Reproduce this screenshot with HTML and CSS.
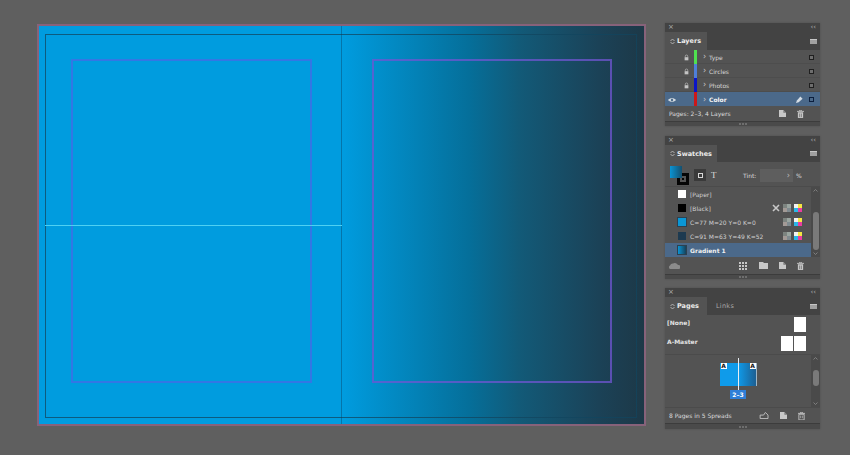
FILE: index.html
```html
<!DOCTYPE html>
<html lang="en">
<head>
<meta charset="utf-8">
<title>InDesign workspace</title>
<link rel="stylesheet" href="styles.css">
</head>
<body>
<main class="workspace">
  <section class="spread">
    <div class="fold"></div>
    <div class="guide"></div>
    <div class="bleed">
      <div class="margin-box left"></div>
      <div class="margin-box right"></div>
    </div>
  </section>

  <aside class="dock">
    <section class="panel layers">
      <div class="panel-top"><span class="x">×</span><span class="collapse">‹‹</span></div>
      <div class="tabbar">
        <div class="tab active"><svg class="updown" viewBox="0 0 5 7"><path d="M.5 3 2.500 1l2 2M.5 4l2 2 2-2" fill="none" stroke="#c8c8c8" stroke-width=".8"/></svg>Layers</div>
        <div class="menu-icon"></div>
      </div>
      <div class="layer-list">
        <div class="layer">
          <span class="eye"></span>
          <svg class="lock" viewBox="0 0 8 9"><path d="M2 4V2.500a2 2 0 0 1 4 0V4" fill="none" stroke="#c4c4c4"/><rect x="1" y="4" width="6" height="5" fill="#c4c4c4"/></svg>
          <span class="layer-color green"></span><span class="chev">›</span><span class="name">Type</span>
          <span class="target"></span>
        </div>
        <div class="layer">
          <span class="eye"></span>
          <svg class="lock" viewBox="0 0 8 9"><path d="M2 4V2.500a2 2 0 0 1 4 0V4" fill="none" stroke="#c4c4c4"/><rect x="1" y="4" width="6" height="5" fill="#c4c4c4"/></svg>
          <span class="layer-color sky"></span><span class="chev">›</span><span class="name">Circles</span>
          <span class="target"></span>
        </div>
        <div class="layer">
          <span class="eye"></span>
          <svg class="lock" viewBox="0 0 8 9"><path d="M2 4V2.500a2 2 0 0 1 4 0V4" fill="none" stroke="#c4c4c4"/><rect x="1" y="4" width="6" height="5" fill="#c4c4c4"/></svg>
          <span class="layer-color blue"></span><span class="chev">›</span><span class="name">Photos</span>
          <span class="target"></span>
        </div>
        <div class="layer selected">
          <svg class="eye-icon" viewBox="0 0 10 7"><path d="M0 3.500C2 .5 8 .5 10 3.500 8 6.500 2 6.500 0 3.500Z" fill="#d6dce2"/><circle cx="5" cy="3.500" r="1.500" fill="#4c6a8a"/></svg>
          <span class="lock-space"></span>
          <span class="layer-color red"></span><span class="chev">›</span><span class="name bright">Color</span>
          <svg class="pen" viewBox="0 0 8 8"><path d="M0 8l1-3 4-4.500 2.500 2.500-4.500 4Z" fill="#d5dde5"/></svg>
          <span class="target blue-target"></span>
        </div>
      </div>
      <div class="footer">
        <span class="foot-text">Pages: 2–3, 4 Layers</span>
        <svg class="tool new" viewBox="0 0 8 8"><path d="M0 0h5l3 3v5H0Z" fill="#c8c8c8"/><path d="M5 0l3 3H5Z" fill="#777"/></svg>
        <svg class="tool trash" viewBox="0 0 8 9"><path d="M0 1.500h8M3 1V0h2v1" fill="none" stroke="#c8c8c8"/><path d="M1 2.500h6V9H1Z" fill="#c8c8c8"/><path d="M3 4v4M5 4v4" stroke="#555" stroke-width=".7"/></svg>
      </div>
      <div class="grip"><i></i><i></i><i></i></div>
    </section>

    <section class="panel swatches">
      <div class="panel-top"><span class="x">×</span><span class="collapse">‹‹</span></div>
      <div class="tabbar">
        <div class="tab active wide"><svg class="updown" viewBox="0 0 5 7"><path d="M.5 3 2.500 1l2 2M.5 4l2 2 2-2" fill="none" stroke="#c8c8c8" stroke-width=".8"/></svg>Swatches</div>
        <div class="menu-icon"></div>
      </div>
      <div class="swatch-tools">
        <div class="fillstroke"><span class="stroke-sw"></span><span class="fill-sw"></span></div>
        <span class="container-btn"><i></i></span>
        <span class="t-btn">T</span>
        <span class="tint-label">Tint:</span>
        <span class="tint-field">›</span>
        <span class="pct">%</span>
      </div>
      <div class="scroll-area">
        <ul class="swatch-list">
          <li class="swatch"><span class="chip paper"></span><span class="sw-name">[Paper]</span></li>
          <li class="swatch"><span class="chip black"></span><span class="sw-name">[Black]</span>
            <svg class="cross" viewBox="0 0 8 8"><path d="M1 1l6 6M7 1L1 7" stroke="#c8c8c8" stroke-width="1.600"/></svg>
            <span class="cmyk-a"></span><span class="cmyk-b"></span></li>
          <li class="swatch"><span class="chip cyan"></span><span class="sw-name">C=77 M=20 Y=0 K=0</span>
            <span class="cmyk-a"></span><span class="cmyk-b"></span></li>
          <li class="swatch"><span class="chip navy"></span><span class="sw-name">C=91 M=63 Y=49 K=52</span>
            <span class="cmyk-a"></span><span class="cmyk-b"></span></li>
          <li class="swatch selected"><span class="chip grad"></span><span class="sw-name bright">Gradient 1</span></li>
        </ul>
        <div class="scrollbar">
          <svg class="arrow" viewBox="0 0 5 3"><path d="M.5 2.500l2-2 2 2" fill="none" stroke="#8c8c8c" stroke-width=".8"/></svg>
          <span class="thumb swatch-thumb"></span>
          <svg class="arrow arrow-down" viewBox="0 0 5 3"><path d="M.5.5l2 2 2-2" fill="none" stroke="#8c8c8c" stroke-width=".8"/></svg>
        </div>
      </div>
      <div class="footer tall">
        <svg class="cloud" viewBox="0 0 11 7"><path d="M1 7a2 2 0 0 1 0-3.500 3 3 0 0 1 3-2 3.500 3.500 0 0 1 5 1.500A2 2 0 0 1 10 7Z" fill="#8b8b8b"/></svg>
        <span class="push"></span>
        <svg class="tool grid-ic" viewBox="0 0 9 8"><path d="M0 0h2v2H0ZM3 0h2v2H3ZM6 0h2v2H6ZM0 3h2v2H0ZM3 3h2v2H3ZM6 3h2v2H6ZM0 6h2v2H0ZM3 6h2v2H3ZM6 6h2v2H6Z" fill="#c8c8c8"/></svg>
        <svg class="tool folder" viewBox="0 0 9 7"><path d="M0 0h4l1 1h4v6H0Z" fill="#c8c8c8"/></svg>
        <svg class="tool new" viewBox="0 0 8 8"><path d="M0 0h5l3 3v5H0Z" fill="#c8c8c8"/><path d="M5 0l3 3H5Z" fill="#777"/></svg>
        <svg class="tool trash" viewBox="0 0 8 9"><path d="M0 1.500h8M3 1V0h2v1" fill="none" stroke="#c8c8c8"/><path d="M1 2.500h6V9H1Z" fill="#c8c8c8"/><path d="M3 4v4M5 4v4" stroke="#555" stroke-width=".7"/></svg>
      </div>
      <div class="grip"><i></i><i></i><i></i></div>
    </section>

    <section class="panel pages">
      <div class="panel-top"><span class="x">×</span><span class="collapse">‹‹</span></div>
      <div class="tabbar">
        <div class="tab active"><svg class="updown" viewBox="0 0 5 7"><path d="M.5 3 2.500 1l2 2M.5 4l2 2 2-2" fill="none" stroke="#c8c8c8" stroke-width=".8"/></svg>Pages</div>
        <div class="tab">Links</div>
        <div class="menu-icon"></div>
      </div>
      <div class="masters">
        <div class="master"><span class="m-name">[None]</span><span class="thumb-page"></span></div>
        <div class="master"><span class="m-name">A-Master</span><span class="thumb-page"></span><span class="thumb-page"></span></div>
      </div>
      <div class="scroll-area pages-area">
        <div class="spread-view">
          <div class="mini">
            <span class="mini-a left-a">A</span>
            <span class="mini-a right-a">A</span>
            <span class="mini-fold"></span>
          </div>
          <span class="mini-label">2–3</span>
        </div>
        <div class="scrollbar">
          <svg class="arrow" viewBox="0 0 5 3"><path d="M.5 2.500l2-2 2 2" fill="none" stroke="#8c8c8c" stroke-width=".8"/></svg>
          <span class="thumb pages-thumb"></span>
          <svg class="arrow arrow-down" viewBox="0 0 5 3"><path d="M.5.5l2 2 2-2" fill="none" stroke="#8c8c8c" stroke-width=".8"/></svg>
        </div>
      </div>
      <div class="footer">
        <span class="foot-text">8 Pages in 5 Spreads</span>
        <svg class="tool shapes" viewBox="0 0 11 8"><path d="M.5 7.500V3.500h4l2-3 3 3v4Z" fill="none" stroke="#c8c8c8"/></svg>
        <svg class="tool new" viewBox="0 0 8 8"><path d="M0 0h5l3 3v5H0Z" fill="#c8c8c8"/><path d="M5 0l3 3H5Z" fill="#777"/></svg>
        <svg class="tool trash" viewBox="0 0 8 9"><path d="M0 1.500h8M3 1V0h2v1" fill="none" stroke="#c8c8c8"/><path d="M1 2.500h6V9H1Z" fill="none" stroke="#c8c8c8"/><path d="M3 4v3M5 4v3" stroke="#c8c8c8" stroke-width=".7"/></svg>
      </div>
      <div class="grip"><i></i><i></i><i></i></div>
    </section>
  </aside>
</main>
</body>
</html>
```
FILE: styles.css
```css
* { box-sizing: border-box; }
html, body { margin: 0; height: 100%; }
body {
  background: #5f5f5f;
  font-family: "DejaVu Sans", "Liberation Sans", sans-serif;
  overflow: hidden;
}
.workspace {
  display: flex;
  width: 850px;
  height: 455px;
  align-items: flex-start;
}

/* Document spread */
.spread {
  position: relative;
  flex: none;
  width: 609px;
  height: 402px;
  margin: 24px 19px 0 37px;
  padding: 8px 7px 6px 6px;
  border: 2px solid #87627a;
  background: linear-gradient(90deg, #009cdf 0, #009cdf 303px, #056f9a 430px, #125a78 480px, #1b4257 560px, #1d3847 606px);
  background-clip: padding-box;
}
.bleed {
  height: 384px;
  padding: 24px 25px 0 25px;
  display: flex;
  border: 1px solid rgba(18, 70, 95, .75);
}
.margin-box {
  flex: none;
  height: 324px;
}
.margin-box.left { width: 241px; margin-right: 60px; border: 2px solid rgba(70, 105, 230, .72); }
.margin-box.right { width: 240px; border: 2px solid rgba(112, 85, 210, .75); }
.fold {
  position: absolute;
  left: 302px;
  top: 0;
  bottom: 0;
  width: 1px;
  background: rgba(10, 60, 90, .4);
}
.guide {
  position: absolute;
  left: 6px;
  top: 199px;
  width: 297px;
  height: 1px;
  background: #4fd0f2;
}

/* Panels */
.dock {
  flex: none;
  width: 155px;
  padding-top: 23px;
  display: flex;
  flex-direction: column;
  gap: 10px;
}
.panel {
  background: #535353;
  color: #dcdcdc;
  font-size: 6px;
  box-shadow: 0 0 2px rgba(0, 0, 0, .2);
}
.panel-top {
  height: 9px;
  background: #434343;
  display: flex;
  justify-content: space-between;
  padding: 0 4px 0 3px;
  line-height: 9px;
  font-size: 7px;
  color: #b0b0b0;
}
.tabbar {
  height: 18px;
  background: #434343;
  display: flex;
  align-items: stretch;
}
.swatches .tabbar { height: 17px; }
.tab {
  width: 34px;
  display: flex;
  align-items: center;
  justify-content: center;
  letter-spacing: .3px;
  font-size: 6.500px;
  color: #a8a8a8;
}
.pages .tab { width: 36px; }
.tab.active {
  background: #535353;
  color: #ececec;
  font-weight: bold;
  font-size: 6.500px;
  width: 42px;
  justify-content: flex-start;
  padding-left: 5px;
  letter-spacing: 0;
}
.tab.wide { width: 52px; }
.updown { width: 5px; height: 7px; margin-right: 2px; flex: none; }
.menu-icon {
  width: 7px;
  height: 5px;
  margin: auto 3px auto auto;
  background: #a0a0a0;
  border-top: 1px solid #c6c6c6;
}

/* Layers */
.layer-list { height: 56px; }
.layer {
  height: 14px;
  display: flex;
  align-items: center;
  border-bottom: 1px solid #4d4d4d;
  padding-top: 1px;
}
.layer.selected { background: #4b698a; border-bottom: 0; }
.eye { width: 19px; flex: none; }
.eye-icon { width: 8px; height: 6px; margin: 0 8px 0 3px; flex: none; }
.lock { width: 5px; height: 7px; flex: none; margin-right: 5px; }
.lock-space { width: 5px; margin-right: 5px; flex: none; }
.layer-color { width: 3px; height: 14px; flex: none; margin: -1px 6px 0 0; }
.green { background: #4fe04f; }
.sky { background: #4f7fd8; }
.blue { background: #0a14c8; }
.red { background: #cc1818; }
.chev { width: 6px; flex: none; color: #c8c8c8; font-size: 8px; line-height: 8px; }
.name { flex: auto; color: #d6d6d6; }
.bright { color: #f4f4f4; font-weight: bold; }
.target {
  width: 5px;
  height: 5px;
  margin: 0 5px 0 6px;
  border: 1px solid #1f1f1f;
  background: #6e6e6e;
  flex: none;
}
.layer-list .target { margin-right: 6px; }
.blue-target { border-color: #0c1f3e; background: #4b698a; }
.pen { width: 7px; height: 7px; flex: none; }

.footer {
  height: 15px;
  display: flex;
  align-items: center;
  padding: 0 16px 0 4px;
  gap: 11px;
}
.footer.tall { height: 17px; }
.foot-text { flex: auto; color: #dcdcdc; font-size: 6px; }
.push { flex: auto; }
.tool { width: 7px; height: 7px; flex: none; }
.tool.trash { height: 8px; }
.tool.shapes { width: 11px; margin-right: -1px; }
.tool.folder { width: 9px; }
.tool.grid-ic { width: 9px; height: 8px; }
.cloud { width: 11px; height: 7px; flex: none; }
.grip {
  height: 5px;
  background: #4a4a4a;
  border-top: 1px solid #3c3c3c;
  display: flex;
  justify-content: center;
  align-items: center;
  gap: 1px;
}
.grip i { width: 2px; height: 2px; background: #6e6e6e; }

/* Swatches */
.swatch-tools {
  height: 24px;
  display: flex;
  align-items: center;
  padding: 2px 5px 0;
}
.fillstroke { position: relative; width: 19px; height: 19px; flex: none; margin-right: 5px; }
.stroke-sw {
  position: absolute; right: 0; bottom: 0;
  width: 12px; height: 12px;
  background: #050505;
  box-shadow: inset 0 0 0 3px #050505, inset 0 0 0 5px #555;
}
.fill-sw {
  position: absolute; left: 0; top: 0;
  width: 12px; height: 12px;
  background: linear-gradient(90deg, #0a94d4, #15506f);
}
.container-btn {
  width: 12px; height: 12px;
  background: #3a3a3a;
  display: flex; align-items: center; justify-content: center;
  flex: none;
}
.container-btn i { width: 5px; height: 5px; border: 1px solid #d8d8d8; }
.t-btn { font-family: "Liberation Serif", serif; font-size: 9px; margin-left: 5px; width: 32px; flex: none; }
.tint-label { width: 17px; flex: none; }
.tint-field {
  width: 33px; height: 13px;
  background: #5e5e5e;
  color: #bdbdbd;
  text-align: right;
  line-height: 13px;
  padding-right: 3px;
  font-size: 8px;
  flex: none;
}
.pct { margin-left: 3px; }
.scroll-area { display: flex; border-top: 1px solid #4b4b4b; }
.swatch-list { list-style: none; margin: 0; padding: 0; flex: auto; min-width: 0; }
.swatch {
  height: 14px;
  display: flex;
  align-items: center;
  padding-left: 13px;
  gap: 3px;
}
.swatch.selected { background: #4b698a; }
.chip { width: 8px; height: 8px; flex: none; margin-right: 1px; }
.paper { background: #fff; }
.black { background: #000; }
.cyan { background: #0a97d6; box-shadow: 0 0 0 1px #2d4150; }
.navy { background: #1d3a50; }
.grad { background: linear-gradient(90deg, #0a94d4, #16415a); box-shadow: 0 0 0 1px #2d4150; }
.sw-name { flex: auto; color: #d0d0d0; font-size: 6px; white-space: nowrap; }
.swatch.selected .sw-name { color: #f0f0f0; font-weight: bold; }
.cross { width: 8px; height: 8px; flex: none; }
.cmyk-a {
  width: 8px; height: 8px; flex: none;
  background: conic-gradient(#9aa5a0 0 25%, #7f8a8f 0 50%, #a39a96 0 75%, #7d8480 0);
}
.cmyk-b {
  width: 8px; height: 8px; flex: none;
  background: conic-gradient(#f5e642 0 25%, #e93da0 0 50%, #2bb7e6 0 75%, #f2f2f2 0);
}
.swatch .cmyk-b { margin-right: 9px; }
.scrollbar {
  position: relative;
  width: 9px;
  flex: none;
  background: #4a4a4a;
}
.arrow { position: absolute; left: 2px; top: 2px; width: 5px; height: 3px; }
.arrow-down { top: auto; bottom: 2px; }
.thumb { display: block; width: 6px; margin: 0 auto; background: #7a7a7a; border-radius: 3px; }
.swatch-thumb { height: 38px; margin-top: 25px; }
.pages-thumb { height: 16px; margin-top: 15px; }

/* Pages */
.masters { height: 39px; padding: 0 14px 0 2px; }
.master {
  height: 18px;
  display: flex;
  align-items: center;
  gap: 1px;
  margin-bottom: 1px;
  font-weight: bold;
  color: #e4e4e4;
}
.m-name { flex: auto; padding-bottom: 3px; }
.thumb-page { width: 12px; height: 15px; background: #fff; flex: none; }
.pages-area { height: 53px; }
.spread-view {
  flex: auto;
  display: flex;
  flex-direction: column;
  align-items: center;
  padding-top: 8px;
}
.mini {
  position: relative;
  width: 37px;
  height: 23px;
  background: linear-gradient(90deg, #0f9bea 0, #0f9bea 50%, #1d5f92 100%);
  border-right: 1px solid #9fb6c6;
}
.mini-fold { position: absolute; left: 18px; top: -5px; width: 1px; height: 32px; background: #e8eef2; }
.mini-a {
  position: absolute;
  top: 0;
  width: 6px;
  height: 6px;
  background: #fff;
  color: #111;
  font-size: 6px;
  line-height: 6px;
  font-weight: bold;
  text-align: center;
}
.left-a { left: 1px; }
.right-a { right: 0; }
.mini-label {
  margin-top: 4px;
  width: 16px;
  height: 9px;
  background: #2f7fd8;
  color: #fff;
  font-size: 6px;
  line-height: 9px;
  font-weight: bold;
  text-align: center;
}
.pages .footer { height: 16px; padding-right: 15px; border-top: 1px solid #4b4b4b; }
.pages .grip { height: 6px; }
.pages { margin-top: -1px; }
```
